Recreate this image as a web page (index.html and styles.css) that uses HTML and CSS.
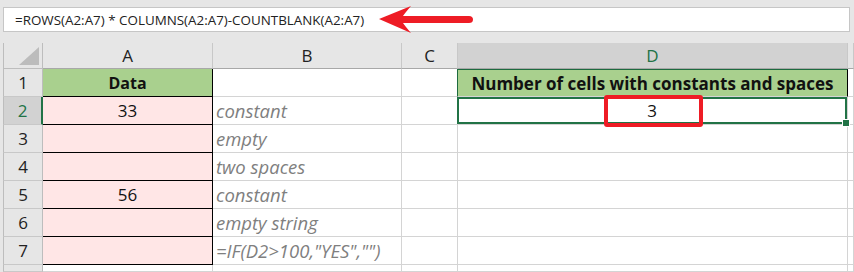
FILE: index.html
```html
<!DOCTYPE html>
<html>
<head>
    <title>COUNTBLANK example</title>
    <link rel="stylesheet" href="styles.css">
</head>
<body>
<div class="formula-bar">
    <span class="formula">=ROWS(A2:A7) * COLUMNS(A2:A7)-COUNTBLANK(A2:A7)</span>
    <svg class="arrow" width="96" height="30" viewBox="0 0 96 30">
        <path d="M0 13 L32 0 Q26 7 24 10 L90 10 Q94 10 94 13.5 Q94 17 90 17 L24 17 Q26 20 32 27 Z" fill="#ee1c25"/>
    </svg>
</div>

<div class="sheet">
    <!-- column headers -->
    <div class="corner"><span class="corner-tri"></span></div>
    <div class="col-head">A</div>
    <div class="col-head">B</div>
    <div class="col-head">C</div>
    <div class="col-head active">D</div>
    <div class="col-head"></div>

    <div class="row-head">1</div>
    <div class="cell data head-cell">Data</div>
    <div class="cell"></div>
    <div class="cell"></div>
    <div class="cell result-head">Number of cells with constants and spaces</div>
    <div class="cell"></div>

    <div class="row-head active">2</div>
    <div class="cell data">33</div>
    <div class="cell note">constant</div>
    <div class="cell"></div>
    <div class="cell selected">3<span class="fill-handle"></span><span class="mark"></span></div>
    <div class="cell"></div>

    <div class="row-head">3</div>
    <div class="cell data"></div>
    <div class="cell note">empty</div>
    <div class="cell"></div>
    <div class="cell"></div>
    <div class="cell"></div>

    <div class="row-head">4</div>
    <div class="cell data"></div>
    <div class="cell note">two spaces</div>
    <div class="cell"></div>
    <div class="cell"></div>
    <div class="cell"></div>

    <div class="row-head">5</div>
    <div class="cell data">56</div>
    <div class="cell note">constant</div>
    <div class="cell"></div>
    <div class="cell"></div>
    <div class="cell"></div>

    <div class="row-head">6</div>
    <div class="cell data"></div>
    <div class="cell note">empty string</div>
    <div class="cell"></div>
    <div class="cell"></div>
    <div class="cell"></div>

    <div class="row-head">7</div>
    <div class="cell data"></div>
    <div class="cell note">=IF(D2&gt;100,"YES","")</div>
    <div class="cell"></div>
    <div class="cell"></div>
    <div class="cell"></div>

    <div class="row-head"></div>
    <div class="cell"></div>
    <div class="cell"></div>
    <div class="cell"></div>
    <div class="cell"></div>
    <div class="cell"></div>
</div>
</body>
</html>
```

FILE: styles.css
```css
body {
    margin: 0;
    width: 854px;
    height: 272px;
    overflow: hidden;
    background-color: #e6e6e6;
    font-family: "Open Sans", Lato, sans-serif;
}

.formula-bar {
    position: relative;
    margin: 7px 4px 0 3px;
    height: 25px;
    box-sizing: border-box;
    background-color: #fff;
    border: 1px solid #c6c6c6;
    padding-left: 11px;
    display: flex;
    align-items: center;
}

.formula {
    font-size: 13.4px;
    color: #222;
}

.arrow {
    position: absolute;
    left: 375px;
    top: -2px;
}

.sheet {
    margin: 11px 0 0 3px;
    display: grid;
    grid-template-columns: 40px 170px 189px 56px 390px 6px;
    grid-template-rows: 26px repeat(7, 28px) 7px;
    background-color: #fff;
}

.corner,
.col-head,
.row-head {
    background-color: #e6e6e6;
    box-sizing: border-box;
    display: flex;
    align-items: center;
    justify-content: center;
    font-size: 17px;
    color: #222;
}

.corner {
    position: relative;
    border-left: 1px solid #bdbdbd;
    border-right: 1px solid #bdbdbd;
    border-bottom: 1px solid #bdbdbd;
}

.corner-tri {
    position: absolute;
    right: 3px;
    bottom: 3px;
    width: 0;
    height: 0;
    border-left: 20px solid transparent;
    border-bottom: 18px solid #bcbcbc;
}

.col-head {
    border-right: 1px solid #c8c8c8;
    border-bottom: 1px solid #a8a8a8;
}

.col-head.active {
    background-color: #d2d2d2;
    color: #217346;
}

.row-head {
    border-left: 1px solid #bdbdbd;
    border-right: 1px solid #bdbdbd;
    border-bottom: 1px solid #c8c8c8;
}

.row-head.active {
    background-color: #d2d2d2;
    color: #217346;
    border-right: 2px solid #217346;
}

.cell {
    position: relative;
    box-sizing: border-box;
    border-right: 1px solid #d4d4d4;
    border-bottom: 1px solid #d4d4d4;
    font-size: 17px;
    color: #111;
    display: flex;
    align-items: center;
    white-space: nowrap;
}

.data {
    background-color: #ffe6e6;
    border-right: 1px solid #000;
    border-bottom: 1px solid #000;
    justify-content: center;
}

.head-cell {
    background-color: #a9d08e;
    font-weight: bold;
    font-size: 16px;
}

.note {
    font-style: italic;
    font-size: 18.5px;
    color: #7f7f7f;
    padding-left: 3px;
}

.result-head {
    background-color: #a9d08e;
    font-weight: bold;
    font-size: 17px;
    justify-content: center;
    border-top: 1px solid #1e6b3f;
    border-left: 1px solid #1e6b3f;
    border-right: 1px solid #000;
    margin-left: -1px;
}

.selected {
    justify-content: center;
    box-shadow: inset 0 0 0 2px #217346;
    margin-left: -1px;
}

.fill-handle {
    position: absolute;
    right: -3px;
    bottom: -3px;
    width: 6px;
    height: 6px;
    background-color: #217346;
    border: 1px solid #fff;
    z-index: 2;
}

.mark {
    position: absolute;
    left: 147px;
    top: -2px;
    width: 99px;
    height: 32px;
    box-sizing: border-box;
    border: 4px solid #ee1c25;
    border-radius: 3px;
}
```
